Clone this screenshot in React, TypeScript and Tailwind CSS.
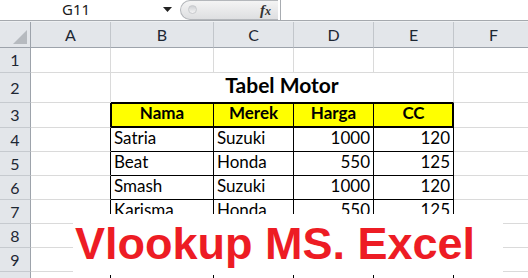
import React from 'react';

const cellFont = { fontFamily: 'Lato, "Open Sans", sans-serif' };

type Row = { n: number; h: string; cells?: string[] };

const rows: Row[] = [
  { n: 1, h: 'h-[25px]' },
  { n: 2, h: 'h-[30px]' },
  { n: 3, h: 'h-[25px]', cells: ['Nama', 'Merek', 'Harga', 'CC'] },
  { n: 4, h: 'h-[24px]', cells: ['Satria', 'Suzuki', '1000', '120'] },
  { n: 5, h: 'h-[24px]', cells: ['Beat', 'Honda', '550', '125'] },
  { n: 6, h: 'h-[24px]', cells: ['Smash', 'Suzuki', '1000', '120'] },
  { n: 7, h: 'h-[24px]', cells: ['Karisma', 'Honda', '550', '125'] },
  { n: 8, h: 'h-[24px]', cells: ['', '', '', ''] },
  { n: 9, h: 'h-[24px]', cells: ['', '', '', ''] },
  { n: 10, h: 'h-[24px]', cells: ['', '', '', ''] },
];

const cols = ['A', 'B', 'C', 'D', 'E', 'F'];

function RowHeader({ n, h }: { n: number; h: string }) {
  // row 10 sits below the bottom edge, its number is not in view
  return (
    <div
      className={`${h} flex items-center justify-center bg-[#e3e6ea] border-r border-r-[#9da3ab] border-b border-b-[#c6cacf] text-[16px] text-[#1d2733]`}
      style={cellFont}
    >
      {n < 10 ? n : ''}
    </div>
  );
}

function TableRow({ row }: { row: Row }) {
  const { n, h, cells } = row;
  const grid = 'border-r border-b border-[#dadada]';

  if (n === 1) {
    return (
      <>
        <RowHeader n={n} h={h} />
        {cols.map((c) => (
          <div key={c} className={`${h} ${grid} bg-white`} />
        ))}
      </>
    );
  }

  if (n === 2) {
    return (
      <>
        <RowHeader n={n} h={h} />
        <div className={`${h} ${grid} bg-white`} />
        <div
          className={`${h} col-span-4 flex items-end justify-center pb-[2px] border-r border-r-[#dadada] border-b border-b-black bg-white text-[21px] font-bold text-black`}
          style={cellFont}
        >
          Tabel Motor
        </div>
        <div className={`${h} ${grid} bg-white`} />
      </>
    );
  }

  const isHead = n === 3;
  return (
    <>
      <RowHeader n={n} h={h} />
      <div className={`${h} border-b border-b-[#dadada] border-r border-r-black bg-white`} />
      {cells!.map((txt, i) => {
        const numeric = i >= 2;
        let cls = `${h} flex items-end pb-[1px] border-r border-b border-black text-[17px] text-black overflow-hidden whitespace-nowrap`;
        if (isHead) {
          cls += ' justify-center font-bold bg-[#ffff00] pb-[2px]';
          if (i === 0) cls += ' shadow-[inset_1px_1px_0_#000,inset_0_-1px_0_#000]';
          else if (i === 3) cls += ' shadow-[inset_-1px_1px_0_#000,inset_0_-1px_0_#000]';
          else cls += ' shadow-[inset_0_1px_0_#000,inset_0_-1px_0_#000]';
        } else if (numeric) {
          cls += ' justify-end pr-[3px] bg-white';
        } else {
          cls += ' justify-start pl-[3px] bg-white';
        }
        return (
          <div key={i} className={cls} style={cellFont}>
            {txt}
          </div>
        );
      })}
      <div className={`${h} ${grid} bg-white`} />
    </>
  );
}

export default function App() {
  return (
    <div className="relative w-[528px] h-[278px] overflow-hidden bg-white">
      {/* formula bar */}
      <div className="flex h-[21px] border-b border-[#a5a9ae] bg-white">
        <div className="relative w-[180px] flex items-center">
          <span
            className="absolute left-[62px] top-[0px] text-[15px] leading-[19px] text-[#1a1a1a]"
            style={{ fontFamily: '"Noto Sans", "Open Sans", sans-serif' }}
          >
            G11
          </span>
          <svg className="absolute left-[163px] top-[7px]" width="9" height="5" viewBox="0 0 9 5">
            <path d="M0 0h9L4.5 5z" fill="#222" />
          </svg>
        </div>
        <div className="relative w-[98px] h-[20px] rounded-l-full border border-r-0 border-[#b4b7bb] bg-gradient-to-b from-[#f4f4f4] to-[#dedfe1]">
          <div className="absolute left-[7px] top-[4px] w-[9px] h-[9px] rounded-full bg-gradient-to-b from-[#cfd1d4] to-[#f4f4f5] border border-[#c8cacd]" />
          <span
            className="absolute left-[79px] top-[0px] text-[15px] italic font-bold leading-[18px] text-[#333]"
            style={{ fontFamily: '"Liberation Serif", serif' }}
          >
            f<span className="text-[12px]">x</span>
          </span>
        </div>
        <div className="flex-1 border-l border-[#a8acb1] ml-[2px] bg-white" />
      </div>
      <div className="h-[1px] bg-[#eef0f2]" />

      {/* sheet grid */}
      <div className="grid grid-cols-[31px_80px_103px_80px_80px_80px_80px]">
        <div className="relative h-[26px] bg-[#e3e6ea] border-r border-b border-[#9da3ab]">
          <svg className="absolute right-[3px] bottom-[3px]" width="14" height="14" viewBox="0 0 14 14">
            <path d="M14 0V14H0z" fill="#b6babf" />
          </svg>
        </div>
        {cols.map((c) => (
          <div
            key={c}
            className="h-[26px] flex items-center justify-center bg-[#e3e6ea] border-r border-r-[#c2c6cb] border-b border-b-[#9da3ab] text-[16px] text-[#1d2733]"
            style={cellFont}
          >
            {c}
          </div>
        ))}
        {rows.map((r) => (
          <TableRow key={r.n} row={r} />
        ))}
      </div>

      {/* title banner */}
      <div className="absolute left-[73px] top-[214px] w-[430px] h-[61px] bg-white pl-[2px] pt-[7px]">
        <div
          className="text-[45px] leading-[45px] font-bold text-[#ed1c24] whitespace-nowrap"
          style={{ fontFamily: '"Liberation Sans", Arial, sans-serif' }}
        >
          Vlookup MS. Excel
        </div>
      </div>
    </div>
  );
}
